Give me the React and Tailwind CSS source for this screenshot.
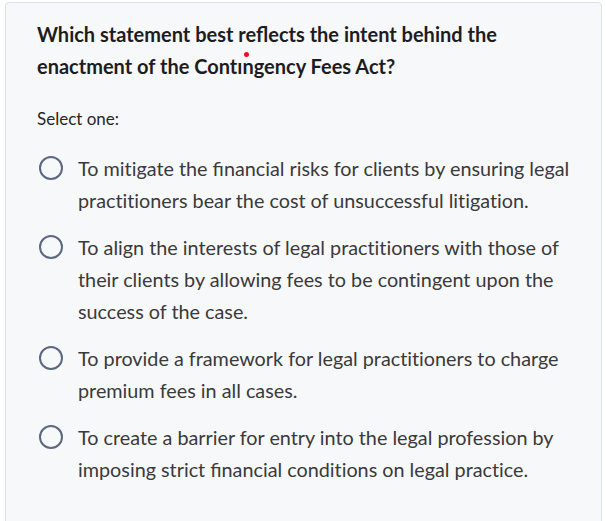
import React from "react";

const options = [
  "To mitigate the financial risks for clients by ensuring legal practitioners bear the cost of unsuccessful litigation.",
  "To align the interests of legal practitioners with those of their clients by allowing fees to be contingent upon the success of the case.",
  "To provide a framework for legal practitioners to charge premium fees in all cases.",
  "To create a barrier for entry into the legal profession by imposing strict financial conditions on legal practice.",
];

const noTi = (s) => s.replace(/ti/g, "t\u200Ci");

export default function App() {
  return (
    <div className="relative w-[606px] h-[521px] bg-white overflow-hidden pl-[5px] pr-[4px] pt-[2px]" style={{ fontFamily: "Lato, 'Noto Sans', sans-serif" }}>
      <div className="h-[560px] bg-[#f7f8fa] border border-[#dde2ea] rounded-[4px] pl-[31px] pr-[22px] pt-[15px]">
        <h1 className="text-[20px] leading-[32px] font-bold text-[#1d1d1f]">
          Which statement best reflects the intent behind the
          <br />
          enactment of the Cont{"\u200C\u0131"}ngency Fees Act?
        </h1>
        <div className="mt-[25px] text-[17px] leading-[24px] text-[#262626]">Select one:</div>
        <div className="mt-[21px] flex flex-col gap-[15px]">
          {options.map((o, i) => (
            <div key={i} className="flex items-start">
              <div className="w-[41px] shrink-0 pt-[4px] pl-[2px]">
                <div className="w-[24px] h-[24px] rounded-full border-2 border-[#5c6781]" />
              </div>
              <div className="w-[500px] text-[19.8px] leading-[32px] text-[#3a3a3a]">{noTi(o)}</div>
            </div>
          ))}
        </div>
      </div>
      <div className="absolute left-[244px] top-[52px] w-[5px] h-[5px] rounded-full bg-[#e8141c]" />
    </div>
  );
}
